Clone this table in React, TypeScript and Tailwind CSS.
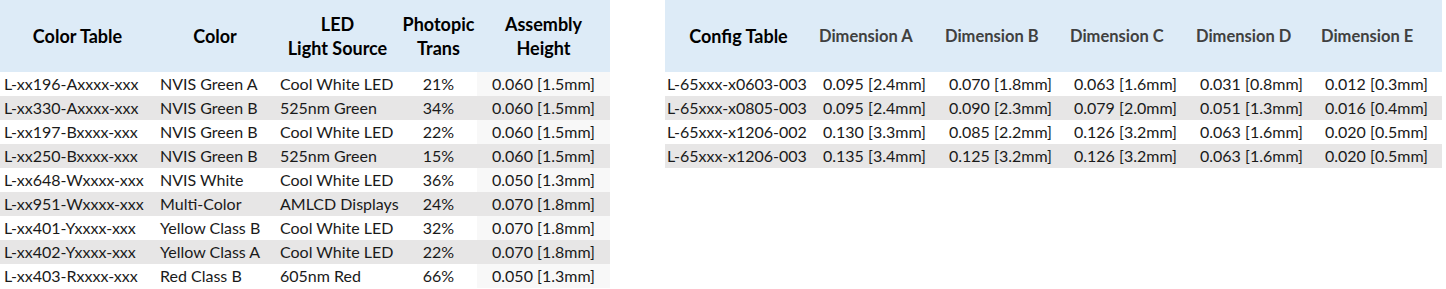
import React from "react";

const colorRows = [
  ["L-xx196-Axxxx-xxx", "NVIS Green A", "Cool White LED", "21%", "0.060 [1.5mm]"],
  ["L-xx330-Axxxx-xxx", "NVIS Green B", "525nm Green", "34%", "0.060 [1.5mm]"],
  ["L-xx197-Bxxxx-xxx", "NVIS Green B", "Cool White LED", "22%", "0.060 [1.5mm]"],
  ["L-xx250-Bxxxx-xxx", "NVIS Green B", "525nm Green", "15%", "0.060 [1.5mm]"],
  ["L-xx648-Wxxxx-xxx", "NVIS White", "Cool White LED", "36%", "0.050 [1.3mm]"],
  ["L-xx951-Wxxxx-xxx", "Multi-Color", "AMLCD Displays", "24%", "0.070 [1.8mm]"],
  ["L-xx401-Yxxxx-xxx", "Yellow Class B", "Cool White LED", "32%", "0.070 [1.8mm]"],
  ["L-xx402-Yxxxx-xxx", "Yellow Class A", "Cool White LED", "22%", "0.070 [1.8mm]"],
  ["L-xx403-Rxxxx-xxx", "Red Class B", "605nm Red", "66%", "0.050 [1.3mm]"],
];

const configRows = [
  ["L-65xxx-x0603-003", "0.095 [2.4mm]", "0.070 [1.8mm]", "0.063 [1.6mm]", "0.031 [0.8mm]", "0.012 [0.3mm]"],
  ["L-65xxx-x0805-003", "0.095 [2.4mm]", "0.090 [2.3mm]", "0.079 [2.0mm]", "0.051 [1.3mm]", "0.016 [0.4mm]"],
  ["L-65xxx-x1206-002", "0.130 [3.3mm]", "0.085 [2.2mm]", "0.126 [3.2mm]", "0.063 [1.6mm]", "0.020 [0.5mm]"],
  ["L-65xxx-x1206-003", "0.135 [3.4mm]", "0.125 [3.2mm]", "0.126 [3.2mm]", "0.063 [1.6mm]", "0.020 [0.5mm]"],
];

function ColorTable() {
  return (
    <table className="table-fixed border-collapse w-[610px] shrink-0">
      <colgroup>
        <col className="w-[155px]" />
        <col className="w-[120px]" />
        <col className="w-[125px]" />
        <col className="w-[77px]" />
        <col className="w-[133px]" />
      </colgroup>
      <thead>
        <tr className="h-[72px] bg-[#ddebf7] text-[18px] text-black leading-[24px]">
          <th className="font-bold whitespace-nowrap">Color Table</th>
          <th className="font-bold">Color</th>
          <th className="font-bold whitespace-nowrap">
            LED
            <br />
            Light Source
          </th>
          <th className="font-bold">
            Photopic
            <br />
            Trans
          </th>
          <th className="font-bold">
            Assembly
            <br />
            Height
          </th>
        </tr>
      </thead>
      <tbody>
        {colorRows.map((r, i) => (
          <tr key={r[0]} className={`h-[24px] ${i % 2 === 1 ? "bg-[#e7e6e6]" : "bg-white"}`}>
            <td className="pl-[4px] whitespace-nowrap">{r[0]}</td>
            <td className="pl-[5px] whitespace-nowrap">{r[1]}</td>
            <td className="pl-[5px] whitespace-nowrap">{r[2]}</td>
            <td className="text-center">{r[3]}</td>
            <td className={`text-center whitespace-nowrap ${i % 2 === 1 ? "" : "bg-[#f8f8f8]"}`}>{r[4]}</td>
          </tr>
        ))}
      </tbody>
    </table>
  );
}

function ConfigTable() {
  const dims = ["Dimension A", "Dimension B", "Dimension C", "Dimension D", "Dimension E"];
  return (
    <table className="table-fixed border-collapse w-[777px] shrink-0">
      <colgroup>
        <col className="w-[147px]" />
        <col className="w-[126px]" />
        <col className="w-[125px]" />
        <col className="w-[126px]" />
        <col className="w-[125px]" />
        <col className="w-[128px]" />
      </colgroup>
      <thead>
        <tr className="h-[72px] bg-[#ddebf7]">
          <th className="font-bold text-[18px] text-black text-center whitespace-nowrap">Config Table</th>
          {dims.map((d) => (
            <th key={d} className="font-bold text-[16.5px] text-[#404040] text-left pl-[7px] whitespace-nowrap">
              {d}
            </th>
          ))}
        </tr>
      </thead>
      <tbody>
        {configRows.map((r, i) => (
          <tr key={r[0]} className={`h-[24px] ${i % 2 === 1 ? "bg-[#e7e6e6]" : "bg-white"}`}>
            <td className="pl-[2px] whitespace-nowrap">{r[0]}</td>
            {r.slice(1).map((v, j) => (
              <td key={j} className="pl-[11px] whitespace-nowrap">
                {v}
              </td>
            ))}
          </tr>
        ))}
      </tbody>
    </table>
  );
}

export default function App() {
  return (
    <div className="w-[1446px] h-[289px] bg-white flex items-start gap-[55px] text-[16px] text-[#1a1a1a] font-['Lato',sans-serif] overflow-hidden">
      <ColorTable />
      <ConfigTable />
    </div>
  );
}
